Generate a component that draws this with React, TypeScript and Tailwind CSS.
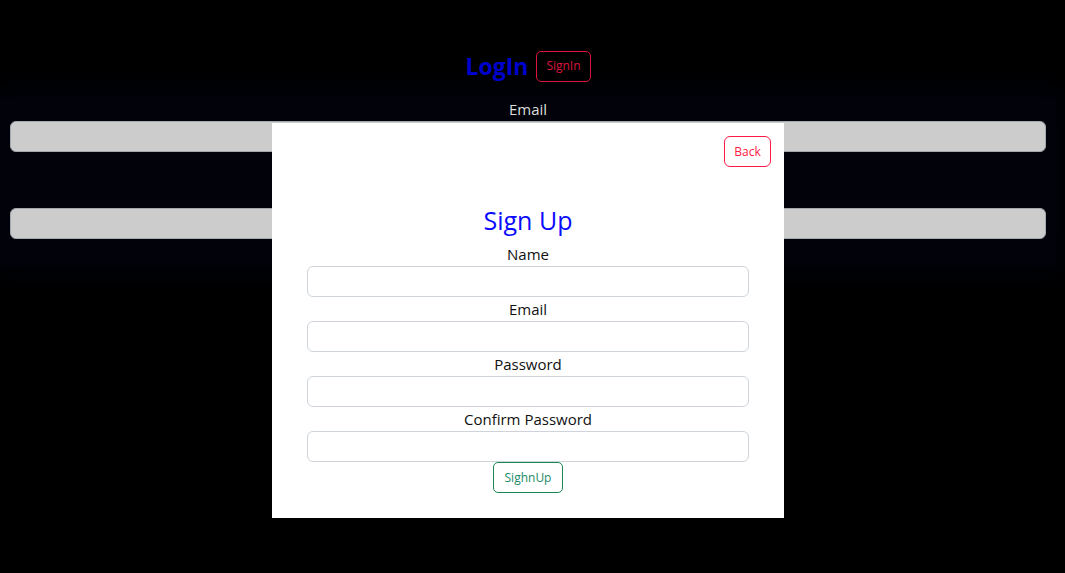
import React from "react";

const font = { fontFamily: '"Open Sans", "Noto Sans", Arial, sans-serif' };

export default function App() {
  return (
    <div className="min-h-screen bg-black relative overflow-hidden" style={font}>
      <div className="w-[1056px] relative">
        {/* ─── Login form behind the modal ─── */}
        <div className="pt-[49px] flex items-center justify-center gap-2">
          <h1 className="text-[23px] font-bold text-[#0000cd] leading-[34px]">LogIn</h1>
          <button className="h-[31px] px-[9px] rounded-[5px] border border-[#dc143c] text-[#dc143c] text-[12px]">
            SignIn
          </button>
        </div>

        <form className="mt-[14px] pb-[26px] shadow-[0_0_36px_10px_rgba(3,6,22,0.45)] bg-[#02030a]">
          <label className="block text-center text-[15px] leading-[24px] text-[#dddddd]">Email</label>
          <input className="mx-[10px] w-[1036px] h-[31px] rounded-[6px] bg-[#cccccc] border border-[#a3a8ad] block" />
          {/* password label sits under the modal */}
          <div className="mt-[32px] h-[24px]" />
          <input type="password" className="mx-[10px] w-[1036px] h-[31px] rounded-[6px] bg-[#cccccc] border border-[#a3a8ad] block" />
        </form>

        {/* ─── Sign Up modal ─── */}
        <div className="absolute left-[272px] top-[123px] w-[512px] h-[395px] bg-white px-[13px] pt-[13px]">
          <div className="flex justify-end">
            <button className="h-[31px] w-[47px] rounded-[6px] border border-[#ff1a45] text-[#ff1a45] text-[12px]">
              Back
            </button>
          </div>

          <h2 className="mt-[38px] mb-[6px] text-center text-[25px] leading-[31px] text-[#0a0aff]">Sign Up</h2>

          <div className="flex flex-col items-center">
            {["Name", "Email", "Password", "Confirm Password"].map((label) => (
              <div key={label} className="w-[442px] flex flex-col">
                <label className="text-center text-[15px] leading-[24px] text-[#111111]">{label}</label>
                <input
                  type={label.includes("Password") ? "password" : "text"}
                  className="h-[31px] w-full rounded-[6px] border border-[#ced4da] bg-white"
                />
              </div>
            ))}
            <button className="h-[31px] w-[70px] rounded-[5px] border border-[#198754] text-[#1c8a68] text-[12px]">
              SighnUp
            </button>
          </div>
        </div>
      </div>
    </div>
  );
}
